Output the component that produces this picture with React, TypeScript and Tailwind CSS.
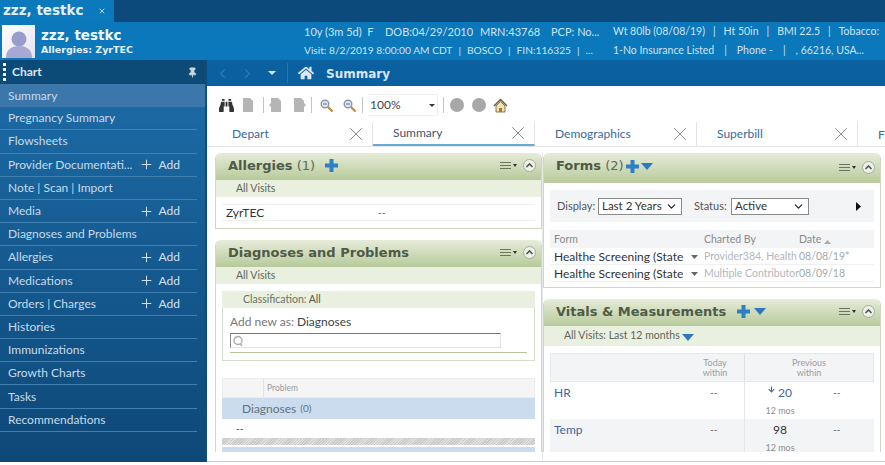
import React, { FC, ReactNode } from "react";
import { X, Plus, Pin, ChevronLeft, ChevronRight, ChevronDown } from "lucide-react";
import { FaBinoculars, FaHome, FaArrowDown } from "react-icons/fa";

const SANS = "font-['Lato','Noto_Sans',sans-serif]";
const HEAD = "font-['DejaVu_Sans',sans-serif]";

const chartItems = [
  { label: "Summary", active: true },
  { label: "Pregnancy Summary" },
  { label: "Flowsheets" },
  { label: "Provider Documentati...", add: true },
  { label: "Note | Scan | Import" },
  { label: "Media", add: true },
  { label: "Diagnoses and Problems" },
  { label: "Allergies", add: true },
  { label: "Medications", add: true },
  { label: "Orders | Charges", add: true },
  { label: "Histories" },
  { label: "Immunizations" },
  { label: "Growth Charts" },
  { label: "Tasks" },
  { label: "Recommendations" },
];

const BlueCross = () => (
  <svg width="15" height="15" viewBox="0 0 15 15" className="shrink-0">
    <path d="M5.5 1h4v4.500H14v4H9.500V14h-4V9.500H1v-4h4.500z" fill="#2f7fc4" />
  </svg>
);

const BlueCaret = () => (
  <svg width="12" height="7" viewBox="0 0 12 7" className="shrink-0">
    <path d="M0 0h12L6 7z" fill="#2f78c0" />
  </svg>
);

const PanelControls = () => (
  <div className="ml-auto flex items-center gap-[6px] pr-[5px]">
    <div className="flex items-center gap-[2px]">
      <div className="flex w-[11px] flex-col gap-[2px]">
        <span className="h-px bg-[#6a7560]" />
        <span className="h-px bg-[#6a7560]" />
        <span className="h-px bg-[#6a7560]" />
      </div>
      <svg width="4" height="3" viewBox="0 0 4 3">
        <path d="M0 0h4L2 3z" fill="#333" />
      </svg>
    </div>
    <svg width="13" height="13" viewBox="0 0 13 13">
      <circle cx="6.500" cy="6.500" r="6" fill="#eef1ea" stroke="#a5ad9c" />
      <path d="M3.500 8l3-3 3 3" fill="none" stroke="#4f5a48" strokeWidth="1.600" />
    </svg>
  </div>
);

const PanelHead: FC<{ children: ReactNode; h: string }> = ({ children, h }) => (
  <div
    className={`${h} flex shrink-0 items-center rounded-t-[6px] bg-gradient-to-b from-[#e6ecd9] to-[#b7ca9b] pb-[2px] pl-3`}
  >
    {children}
    <PanelControls />
  </div>
);

const Title: FC<{ children: ReactNode; count?: string }> = ({ children, count }) => (
  <span className={`${HEAD} text-[13px] font-bold text-[#4f5a47]`}>
    {children}
    {count && <span className="font-normal text-[#5e6b50]"> {count}</span>}
  </span>
);

const SubRow: FC<{ children: ReactNode; h?: string }> = ({ children, h = "h-[17px]" }) => (
  <div className={`${h} flex shrink-0 items-center bg-[#e9f0df] pl-5 text-[10.500px] text-[#5f665a]`}>
    {children}
  </div>
);

const Tab: FC<{ label: string; active?: boolean; w: string }> = ({ label, active, w }) => (
  <div
    className={`${w} flex h-full shrink-0 items-center justify-between border-r border-[#e2e4e6] pb-[1px] pl-[20px] pr-[5px] text-[12px] ${
      active ? "border-b-2 border-b-[#69aad3] text-[#40566b]" : "text-[#39699a]"
    }`}
  >
    <span>{label}</span>
    <X size={22} strokeWidth={0.9} className="text-[#777]" />
  </div>
);

const DocIcon: FC<{ back?: boolean; fwd?: boolean }> = ({ back, fwd }) => (
  <svg width="14" height="14" viewBox="0 0 14 14" className="shrink-0">
    <path d="M2 0h7l3 3v11H2z" fill="#b5b5b5" />
    {back && <path d="M0 7l3-3v6z" fill="#b5b5b5" />}
    {fwd && <path d="M14 7l-3-3v6z" fill="#b5b5b5" />}
  </svg>
);

const MagIcon = () => (
  <svg width="15" height="15" viewBox="0 0 15 15" className="shrink-0">
    <circle cx="6" cy="6" r="3.800" fill="#dfe8f2" stroke="#8b96a3" strokeWidth="1.400" />
    <path d="M9 9l4.500 4.500" stroke="#c98a3c" strokeWidth="2.400" />
    <path d="M4 6h4" stroke="#4a6ea8" strokeWidth="1" />
  </svg>
);

const Sep = () => <span className="h-[16px] w-px shrink-0 bg-[#bfc5cb]" />;

// pipe between banner values
const Pipe: FC<{ className?: string }> = ({ className = "mx-[6px]" }) => <span className={className}>|</span>;

const Sidebar = () => (
  <div className="flex h-full w-[207px] shrink-0 flex-col border-r-2 border-[#0e4c7e]">
    <div className="flex h-[24px] shrink-0 items-center bg-[#0c4a78] pl-[3px] pr-[7px]">
      <div className="flex flex-col gap-[2px]">
        <span className="h-[3px] w-[3px] bg-white" />
        <span className="h-[3px] w-[3px] bg-white" />
        <span className="h-[3px] w-[3px] bg-white" />
        <span className="h-[3px] w-[3px] bg-white" />
      </div>
      <span className="ml-[6px] text-[12px] font-bold text-[#dde8f1]">Chart</span>
      <Pin size={11} className="ml-auto text-[#c9d6e2]" fill="#c9d6e2" />
    </div>
    <div className="flex-1 bg-gradient-to-b from-[#1c6ba6] to-[#0e4878]">
      {chartItems.map((item) => (
        <div
          key={item.label}
          className={`flex h-[23.2px] items-center whitespace-nowrap pl-[8px] pr-[17px] text-[12px] text-[#c7dbea] ${
            item.active ? "bg-[#3b77aa]" : "mr-[8px] border-b border-[#3f7fb1]"
          }`}
        >
          <span>{item.label}</span>
          {item.add && (
            <span className="ml-auto flex items-center gap-[5px] text-[#d2e1ed]">
              <Plus size={15} strokeWidth={1.600} />
              Add
            </span>
          )}
        </div>
      ))}
    </div>
  </div>
);

const Allergies = () => (
  <div className="flex h-[76px] shrink-0 flex-col rounded-t-[6px] border border-t-0 border-[#cfd8c2]">
    <PanelHead h="h-[27px]">
      <Title count="(1)">Allergies</Title>
      <span className="ml-[9px] flex">
        <BlueCross />
      </span>
    </PanelHead>
    <SubRow>All Visits</SubRow>
    <div className="mx-[6px] mt-[7px] flex h-[17px] items-center border-y border-[#f0f0f0] pl-[4px] text-[12px] text-[#333]">
      <span className="w-[152px]">ZyrTEC</span>
      <span className="text-[10px] text-[#555]">--</span>
    </div>
  </div>
);

const Diagnoses = () => (
  <div className="mt-[11px] flex flex-1 flex-col overflow-hidden rounded-t-[6px] border-x border-[#cfd8c2]">
    <PanelHead h="h-[27px]">
      <Title>Diagnoses and Problems</Title>
    </PanelHead>
    <SubRow>All Visits</SubRow>
    <div className="mx-[6px] mt-[7px] h-[17px] shrink-0 bg-[#e9f0df] pl-[21px] text-[10.500px] leading-[17px] text-[#6a7068]">
      Classification: <span className="text-[#555]">All</span>
    </div>
    <div className="mx-[6px] h-[53px] shrink-0 border border-t-0 border-[#d5dccb] px-[7px] pt-[6px]">
      <div className="text-[12px] leading-[16px] text-[#777]">
        Add new as: <span className="text-[#444]">Diagnoses</span>
      </div>
      <div className="mt-[3px] border-b border-[#b5c69c] pb-[4px]">
        <div className="flex h-[15px] w-[271px] items-center border border-[#e3e3e3] border-l-[#888] border-t-[#777] pl-[1px]">
          <svg width="12" height="12" viewBox="0 0 12 12">
            <circle cx="6" cy="5.500" r="4" fill="none" stroke="#aaa" strokeWidth="1.400" />
            <path d="M8.500 9l1.500 2" stroke="#aaa" strokeWidth="1.400" />
          </svg>
        </div>
      </div>
    </div>
    <div className="mx-[6px] mt-[17px] flex h-[20px] shrink-0 items-center border border-[#ececec] bg-[#f5f5f5] text-[8.500px] text-[#9a9a9a]">
      <span className="h-full w-[41px] border-r border-[#e2e2e2]" />
      <span className="pl-[3px]">Problem</span>
    </div>
    <div className="mx-[6px] flex h-[21px] shrink-0 items-center bg-[#cbdcef] pl-[20px] text-[12px] text-[#66717d]">
      Diagnoses <span className="ml-1 text-[10px]">(0)</span>
    </div>
    <div className="mx-[6px] flex h-[19px] shrink-0 items-center pl-[14px] text-[10px] text-[#333]">--</div>
    <div className="mx-[6px] h-[7px] shrink-0 bg-[repeating-linear-gradient(135deg,#c9c9c9_0,#c9c9c9_1px,#e0e0e0_1px,#e0e0e0_2px)]" />
    <div className="mx-[6px] mt-[2px] h-[5px] shrink-0 bg-[#cbdcef]" />
  </div>
);

const SelectBox: FC<{ label: string; w: string }> = ({ label, w }) => (
  <div
    className={`${w} flex h-[17px] items-center justify-between border border-[#8a8a8a] bg-white px-[3px] text-[11.500px] leading-none text-[#333]`}
  >
    {label}
    <ChevronDown size={13} strokeWidth={2.200} className="text-[#222]" />
  </div>
);

const Forms = () => (
  <div className="flex h-[135px] shrink-0 flex-col rounded-t-[6px] border border-t-0 border-[#cfd8c2]">
    <PanelHead h="h-[30px]">
      <span className="mb-[2px] flex items-center">
        <Title count="(2)">Forms</Title>
        <span className="ml-px flex items-center gap-px">
          <BlueCross />
          <BlueCaret />
        </span>
      </span>
    </PanelHead>
    <div className="mx-[6px] mt-[7px] flex h-[32px] shrink-0 items-center bg-[#f3f4f5] pl-[7px] pr-[13px] text-[11px] text-[#555]">
      <span className="w-[41px]">Display:</span>
      <SelectBox label="Last 2 Years" w="w-[84px]" />
      <span className="ml-[12px] w-[37px]">Status:</span>
      <SelectBox label="Active" w="w-[78px]" />
      <svg width="5" height="9" viewBox="0 0 5 9" className="ml-auto">
        <path d="M0 0l5 4.500L0 9z" fill="#111" />
      </svg>
    </div>
    <div className="mx-[6px] mt-[8px] flex h-[18px] shrink-0 items-center bg-[#f3f4f5] pl-[4px] pt-[1px] text-[10.500px] text-[#8a8a8a]">
      <span className="w-[150px]">Form</span>
      <span className="w-[95px]">Charted By</span>
      <span>Date</span>
      <svg width="7" height="4" viewBox="0 0 7 4" className="ml-[3px] mt-[4px]">
        <path d="M0 4h7L3.500 0z" fill="#aaa" />
      </svg>
    </div>
    {[
      { by: "Provider384, Health", date: "08/08/19*" },
      { by: "Multiple Contributor", date: "08/09/18" },
    ].map((row) => (
      <div
        key={row.date}
        className="mx-[6px] flex h-[17px] shrink-0 items-center whitespace-nowrap border-b border-[#eef0f2] pl-[4px] pt-[1px] text-[10.500px] text-[#b3b6ba]"
      >
        <span className="w-[137px] text-[12px] text-[#2e3338]">Healthe Screening (State</span>
        <svg width="7" height="4" viewBox="0 0 7 4" className="mr-[6px]">
          <path d="M0 0h7L3.500 4z" fill="#666" />
        </svg>
        <span className="w-[95px] overflow-hidden">{row.by}</span>
        <span className="text-[#a3a9ae]">{row.date}</span>
      </div>
    ))}
  </div>
);

const VitalRow: FC<{ name: string; val: ReactNode; shade?: boolean; h: string }> = ({ name, val, shade, h }) => (
  <div className={`${h} flex shrink-0 pt-[2px] text-[12px] ${shade ? "bg-[#f3f4f5]" : ""}`}>
    <span className="w-[120px] pl-[4px] text-[#3e66a0]">{name}</span>
    <span className="w-[74px] pl-[40px] pt-[1px] text-[10px] text-[#555]">--</span>
    <div className="flex w-[72px] flex-col items-center">
      {val}
      <span className="mt-[2px] whitespace-nowrap text-[9px] text-[#8b8f93]">12 mos</span>
    </div>
    <span className="pl-[17px] pt-[1px] text-[10px] text-[#555]">--</span>
  </div>
);

const Vitals = () => (
  <div className="mt-[11px] flex flex-1 flex-col overflow-hidden rounded-t-[6px] border-x border-[#cfd8c2]">
    <PanelHead h="h-[27px]">
      <Title>Vitals &amp; Measurements</Title>
      <span className="ml-[10px] flex items-center gap-[3px]">
        <BlueCross />
        <BlueCaret />
      </span>
    </PanelHead>
    <SubRow h="h-[20px]">
      All Visits: Last 12 months
      <span className="ml-[2px] mt-[2px] flex">
        <BlueCaret />
      </span>
    </SubRow>
    <div className="mx-[6px] mt-[7px] flex h-[29px] shrink-0 border border-[#e8e8e8] bg-[#f3f4f5] text-center text-[9px] leading-[10px] text-[#9a9ea2]">
      <span className="w-[120px]" />
      <span className="w-[74px] pl-[14px] pt-[4px]">
        Today
        <br />
        within
      </span>
      <span className="ml-[-1px] flex-1 border-l border-[#e0e0e0] pt-[4px]">
        Previous
        <br />
        within
      </span>
    </div>
    <div className="relative mx-[6px] flex-1 overflow-hidden">
      <VitalRow
        name="HR"
        h="h-[37px]"
        val={
          <span className="flex items-start gap-[3px] text-[#3e66a0]">
            <FaArrowDown size={7} className="mt-[2px]" />
            20
          </span>
        }
      />
      <VitalRow name="Temp" h="h-[36px]" shade val={<span className="text-[#333]">98</span>} />
      <span className="absolute bottom-0 left-[194px] top-0 w-px bg-[#e4e6e8]" />
    </div>
  </div>
);

const App = () => (
  <div className={`${SANS} flex h-[465px] w-[885px] flex-col overflow-hidden bg-white`}>
    {/* patient tabs */}
    <div className="flex h-[22px] shrink-0 bg-[#0b4a7a]">
      <div className="flex w-[114px] items-center justify-between bg-[#0a7abc] pb-[1px] pl-[3px] pr-[8px]">
        <span className={`${HEAD} text-[13.500px] font-bold text-[#e4f0f8]`}>zzz, testkc</span>
        <X size={8} className="text-[#bcd6e8]" strokeWidth={3} />
      </div>
    </div>

    {/* banner */}
    <div className="flex h-[38px] shrink-0 items-center bg-[#0a78ba] text-[11px] text-[#cfe4f2]">
      <div className="ml-[2px] flex h-[33px] w-[33px] shrink-0 items-end justify-center overflow-hidden bg-gradient-to-br from-white to-[#e3e3ef]">
        <svg width="30" height="31" viewBox="0 0 30 31">
          <circle cx="15" cy="12" r="7.500" fill="#9a9ccb" />
          <path d="M2 31c0-9 6-12 13-12s13 3 13 12z" fill="#a7a9d2" />
        </svg>
      </div>
      <div className="ml-[6px] w-[263px] shrink-0">
        <div className={`${HEAD} pt-[1px] text-[13.500px] font-bold leading-[17px] text-[#f0f7fb]`}>zzz, testkc</div>
        <div className={`${HEAD} text-[9.500px] font-bold leading-[12px] text-[#e6f1f8]`}>Allergies: ZyrTEC</div>
      </div>
      <div className="w-[309px] shrink-0 whitespace-nowrap leading-[19px]">
        <div className="flex">
          <span className="w-[81px]">10y (3m 5d)&nbsp; F</span>
          <span className="w-[95px]">DOB:04/29/2010</span>
          <span className="w-[71px]">MRN:43768</span>
          <span>PCP: No...</span>
        </div>
        <div className="text-[10.200px]">
          Visit: 8/2/2019 8:00:00 AM CDT
          <Pipe />
          BOSCO
          <Pipe />
          FIN:116325
          <Pipe />
          ...
        </div>
      </div>
      <div className="flex-1 overflow-hidden whitespace-nowrap text-[10.500px] leading-[19px]">
        <div>
          Wt 80lb (08/08/19)
          <Pipe className="mx-[8px]" />
          Ht 50in
          <Pipe className="mx-[8px]" />
          BMI 22.5
          <Pipe className="mx-[8px]" />
          Tobacco:
        </div>
        <div>
          1-No Insurance Listed
          <Pipe className="mx-[10px]" />
          Phone -
          <Pipe className="mx-[10px]" />
          , 66216, USA...
        </div>
      </div>
    </div>

    <div className="flex min-h-0 flex-1 pb-[3px]">
      <Sidebar />
      <div className="flex min-w-0 flex-1 flex-col border-b border-[#c9cdd1]">
        {/* nav bar */}
        <div className="flex h-[26px] shrink-0 items-center bg-[#0b60a0] pl-[8px]">
          <ChevronLeft size={15} className="text-[#2f78b3]" />
          <ChevronRight size={15} className="ml-[10px] text-[#2f78b3]" />
          <svg width="8" height="4" viewBox="0 0 8 4" className="ml-[13px]">
            <path d="M0 0h8L4 4z" fill="#d5e4f0" />
          </svg>
          <span className="ml-[11px] h-[20px] w-px bg-[#2a72aa]" />
          <FaHome size={16} className="ml-[10px] text-[#dbe8f2]" />
          <span className={`${HEAD} ml-[12px] pt-[1px] text-[12px] font-bold text-[#d8e6f1]`}>Summary</span>
        </div>

        {/* toolbar */}
        <div className="flex h-[36px] shrink-0 items-center gap-[5px] pl-[12px] pt-[2px]">
          <FaBinoculars size={15} className="text-[#333]" />
          <span className="ml-[2px] flex"><DocIcon /></span>
          <span className="ml-[3px] flex"><Sep /></span>
          <DocIcon back />
          <span className="ml-[4px] flex"><DocIcon fwd /></span>
          <Sep />
          <span className="ml-[2px] flex"><MagIcon /></span>
          <span className="ml-[3px] flex"><MagIcon /></span>
          <Sep />
          <div className="flex h-[22px] w-[70px] items-center justify-between border-y border-r border-[#f0f0f0] pl-[2px] pr-[2px] text-[12px] text-[#444]">
            100%
            <svg width="6" height="3" viewBox="0 0 6 3">
              <path d="M0 0h6L3 3z" fill="#333" />
            </svg>
          </div>
          <Sep />
          <span className="ml-[1px] h-[14px] w-[14px] rounded-full bg-[#a8a8a8]" />
          <span className="ml-[3px] h-[14px] w-[14px] rounded-full bg-[#a8a8a8]" />
          <svg width="15" height="15" viewBox="0 0 15 15" className="ml-[2px]">
            <path d="M1 8l6.500-6.500L14 8" fill="none" stroke="#6a5a2c" strokeWidth="1.500" />
            <path d="M3 8l4.500-4.500L12 8v6H3z" fill="#f0e3b5" stroke="#6a5a2c" strokeWidth="0.800" />
            <path d="M6 14v-4h3v4z" fill="#b0752e" />
          </svg>
        </div>

        {/* tabs */}
        <div className="flex h-[25px] shrink-0 overflow-hidden border-b border-[#e2e4e6] pl-[5px]">
          <Tab label="Depart" w="w-[161px]" />
          <Tab label="Summary" active w="w-[162px]" />
          <Tab label="Demographics" w="w-[162px]" />
          <Tab label="Superbill" w="w-[161px]" />
          <span className="pl-[20px] pt-[4px] text-[12px] text-[#39699a]">F</span>
        </div>

        {/* panels */}
        <div className="flex min-h-0 flex-1 pl-[8px] pt-[6px]">
          <div className="flex w-[327px] shrink-0 flex-col pb-[9px]">
            <Allergies />
            <Diagnoses />
          </div>
          <div className="mr-[4px] flex min-w-0 flex-1 flex-col border-l border-[#e5e7e9] pb-[9px]">
            <Forms />
            <Vitals />
          </div>
        </div>
      </div>
    </div>
  </div>
);

export default App;
